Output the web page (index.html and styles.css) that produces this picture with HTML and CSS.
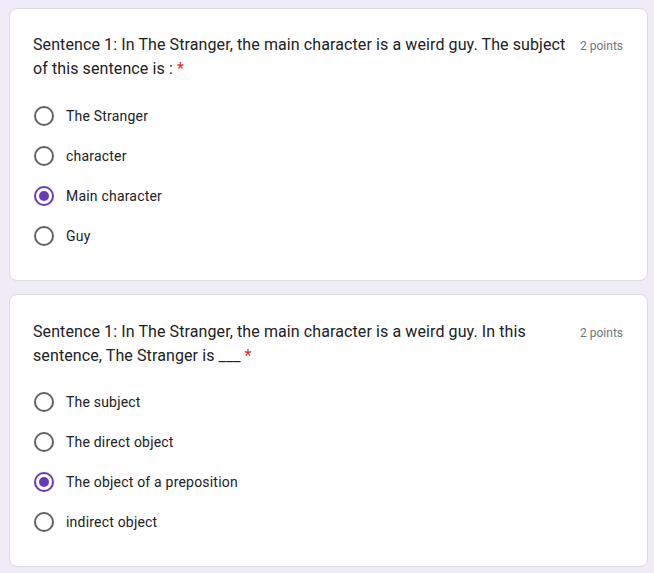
FILE: index.html
```html
<!DOCTYPE html>
<html>
<head>
<meta charset="utf-8">
<link rel="stylesheet" href="styles.css">
</head>
<body>
<div class="page">
  <div class="card">
    <div class="head">
      <div class="title">Sentence 1: In The Stranger, the main character is a weird guy. The subject of this sentence is : <span class="req">*</span></div>
      <div class="points">2 points</div>
    </div>
    <div class="options">
      <div class="opt"><span class="radio"></span><span class="label">The Stranger</span></div>
      <div class="opt"><span class="radio"></span><span class="label">character</span></div>
      <div class="opt"><span class="radio checked"></span><span class="label">Main character</span></div>
      <div class="opt"><span class="radio"></span><span class="label">Guy</span></div>
    </div>
  </div>
  <div class="card">
    <div class="head">
      <div class="title">Sentence 1: In The Stranger, the main character is a weird guy. In this sentence, The Stranger is ___ <span class="req">*</span></div>
      <div class="points">2 points</div>
    </div>
    <div class="options">
      <div class="opt"><span class="radio"></span><span class="label">The subject</span></div>
      <div class="opt"><span class="radio"></span><span class="label">The direct object</span></div>
      <div class="opt"><span class="radio checked"></span><span class="label">The object of a preposition</span></div>
      <div class="opt"><span class="radio"></span><span class="label">indirect object</span></div>
    </div>
  </div>
</div>
</body>
</html>
```

FILE: styles.css
```css
html, body {
  margin: 0;
  padding: 0;
  background: #f0ebf8;
}
.page {
  padding: 8px 6px 0 9px;
  display: flex;
  flex-direction: column;
  gap: 13px;
}
.card {
  background: #fff;
  border: 1px solid #dadce0;
  border-radius: 8px;
  height: 273px;
  box-sizing: border-box;
  padding: 24px 24px 0 23px;
}
.card + .card {
  padding-top: 25px;
}
.card + .card .options {
  margin-top: 14px;
}
.head {
  display: flex;
  align-items: flex-start;
}
.title {
  flex: 0 0 540px;
  font-family: Roboto, "Liberation Sans", sans-serif;
  font-size: 16px;
  line-height: 24px;
  letter-spacing: 0.1px;
  color: #202124;
}
.req {
  color: #d93025;
}
.points {
  margin-left: auto;
  padding-top: 1px;
  font-family: Roboto, "Liberation Sans", sans-serif;
  font-size: 12px;
  line-height: 24px;
  color: #70757a;
  white-space: nowrap;
}
.options {
  margin-top: 15px;
  display: flex;
  flex-direction: column;
}
.opt {
  height: 40px;
  display: flex;
  align-items: center;
}
.radio {
  width: 20px;
  height: 20px;
  box-sizing: border-box;
  border: 2px solid #5f6368;
  border-radius: 50%;
  margin-left: 1px;
  position: relative;
}
.radio.checked {
  border-color: #673ab7;
}
.radio.checked::after {
  content: "";
  position: absolute;
  left: 3px;
  top: 3px;
  width: 10px;
  height: 10px;
  border-radius: 50%;
  background: #673ab7;
}
.label {
  margin-left: 12px;
  font-family: Roboto, "Liberation Sans", sans-serif;
  font-size: 14px;
  letter-spacing: 0.2px;
  color: #202124;
}
```
